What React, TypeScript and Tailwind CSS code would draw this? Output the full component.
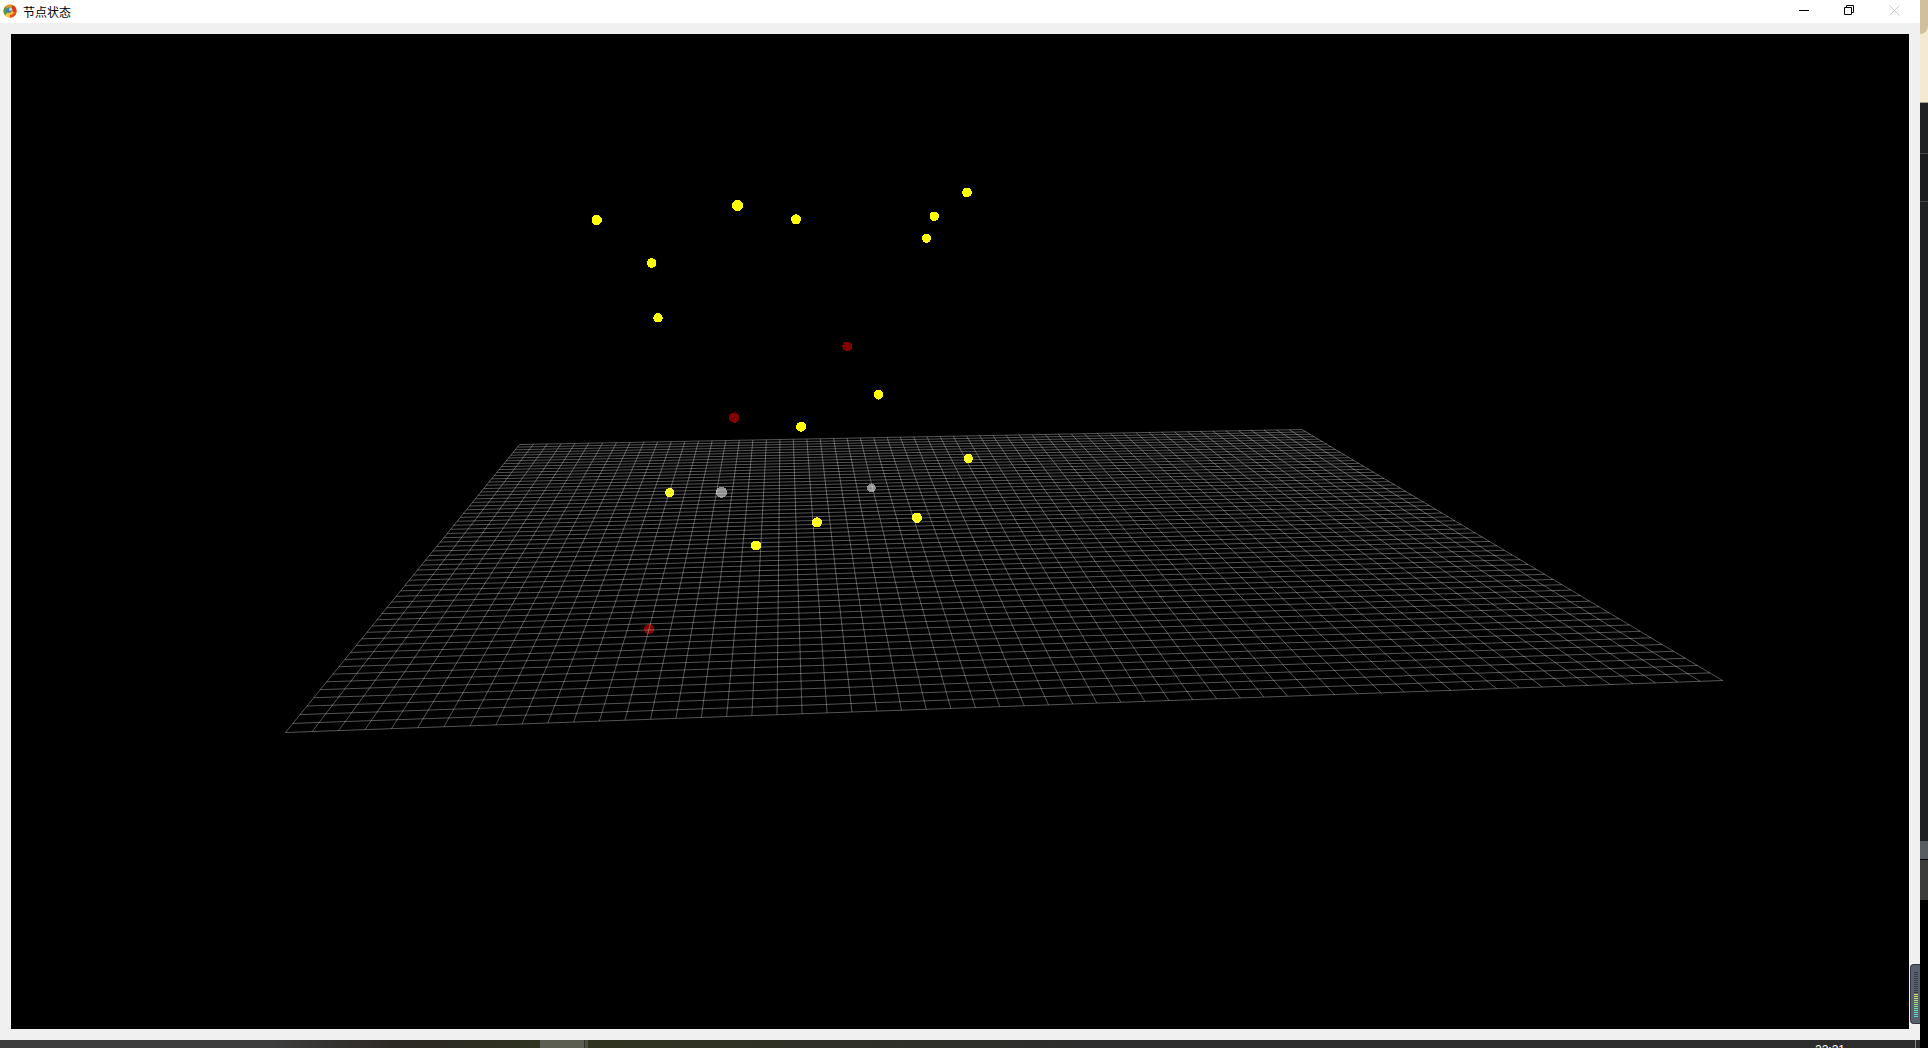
import type { ReactNode } from 'react';

type Point = [number, number];

const CELLS = 59;

// Corners of the floor grid, clockwise from the near left one
const CORNERS: Point[] = [
  [274.5, 698.5],
  [1711.5, 646.5],
  [1291, 395.5],
  [508.5, 410.5],
];

function createProjection([p0, p1, p2, p3]: Point[]) {
  const dx1 = p1[0] - p2[0];
  const dy1 = p1[1] - p2[1];
  const dx2 = p3[0] - p2[0];
  const dy2 = p3[1] - p2[1];
  const sx = p0[0] - p1[0] + p2[0] - p3[0];
  const sy = p0[1] - p1[1] + p2[1] - p3[1];
  const det = dx1 * dy2 - dx2 * dy1;
  const g = (sx * dy2 - dx2 * sy) / det;
  const h = (dx1 * sy - sx * dy1) / det;
  const a = p1[0] - p0[0] + g * p1[0];
  const b = p3[0] - p0[0] + h * p3[0];
  const d = p1[1] - p0[1] + g * p1[1];
  const e = p3[1] - p0[1] + h * p3[1];

  return (u: number, v: number): Point => {
    const w = g * u + h * v + 1;
    return [(a * u + b * v + p0[0]) / w, (d * u + e * v + p0[1]) / w];
  };
}

const project = createProjection(CORNERS);

const gridPath = Array.from({ length: CELLS + 1 }, (_, i) => {
  const t = i / CELLS;
  const [ax, ay] = project(t, 0);
  const [bx, by] = project(t, 1);
  const [cx, cy] = project(0, t);
  const [dx, dy] = project(1, t);
  return `M${ax} ${ay}L${bx} ${by}M${cx} ${cy}L${dx} ${dy}`;
}).join('');

const COLORS = {
  active: '#ffff00',
  fault: '#800000',
  idle: '#8c8c8c',
};

const nodes: { x: number; y: number; r: number; state: keyof typeof COLORS }[] = [
  { x: 585.7, y: 186, r: 5.2, state: 'active' },
  { x: 726.5, y: 171.5, r: 5.5, state: 'active' },
  { x: 785, y: 185.3, r: 5, state: 'active' },
  { x: 956, y: 158.5, r: 4.8, state: 'active' },
  { x: 923.3, y: 182.3, r: 4.8, state: 'active' },
  { x: 915.5, y: 204.2, r: 4.6, state: 'active' },
  { x: 640.6, y: 229, r: 4.8, state: 'active' },
  { x: 647, y: 283.7, r: 4.7, state: 'active' },
  { x: 836.2, y: 312.4, r: 4.9, state: 'fault' },
  { x: 867.5, y: 360.7, r: 4.9, state: 'active' },
  { x: 723.2, y: 383.6, r: 5.2, state: 'fault' },
  { x: 790.1, y: 392.7, r: 5, state: 'active' },
  { x: 957.4, y: 424.5, r: 4.6, state: 'active' },
  { x: 658.7, y: 458.6, r: 4.6, state: 'active' },
  { x: 710.5, y: 458.3, r: 5.6, state: 'idle' },
  { x: 860.3, y: 454, r: 4.5, state: 'idle' },
  { x: 906, y: 483.8, r: 5.1, state: 'active' },
  { x: 806, y: 488.4, r: 5, state: 'active' },
  { x: 745, y: 511.5, r: 5, state: 'active' },
  { x: 638, y: 595, r: 5, state: 'fault' },
];

function AppLogo() {
  return (
    <svg className="h-[14px] w-[14px] shrink-0" viewBox="0 0 14 14" aria-hidden>
      <circle cx="7" cy="7" r="6.6" fill="#e9a13a" />
      <path d="M3 1.9A6.6 6.6 0 0 0 2 11.3L5 8.6 4.2 5Z" fill="#5b9a3c" />
      <path d="M3 1.9A6.6 6.6 0 0 1 9.5.9L8.4 4.2 4.2 5Z" fill="#d99a2c" />
      <path d="M9.5.9A6.6 6.6 0 0 1 13.3 8.8L9.8 8 8.4 4.2Z" fill="#d83a1e" />
      <path d="M13.3 8.8A6.6 6.6 0 0 1 6.6 13.6L7.2 10 9.8 8Z" fill="#e8491f" />
      <path d="M2 11.3A6.6 6.6 0 0 0 6.6 13.6L7.2 10 5 8.6Z" fill="#f3cf3a" />
      <circle cx="6" cy="6.2" r="2.7" fill="#3f83b5" />
      <circle cx="7.6" cy="5.3" r="1.5" fill="#bfe0ec" />
      <path d="M6.5 9.4l3-2.6 1.3 2-2.6 2.4Z" fill="#f7c331" />
    </svg>
  );
}

function CaptionButton({ label, disabled, children }: { label: string; disabled?: boolean; children: ReactNode }) {
  return (
    <button
      type="button"
      aria-label={label}
      disabled={disabled}
      className="flex h-[21px] w-[45px] items-center justify-center text-black disabled:text-[#c8c8c8]"
    >
      <svg className="h-[11px] w-[11px]" viewBox="0 0 11 11" fill="none" stroke="currentColor" aria-hidden>
        {children}
      </svg>
    </button>
  );
}

function TitleBar() {
  return (
    <header className="flex h-[23px] items-start bg-white pr-[3px] pl-[3px]">
      <div className="flex flex-1 items-start gap-[6px] pt-1">
        <AppLogo />
        <h1 className="font-['Noto_Sans_CJK_SC',sans-serif] text-xs leading-4 text-black">节点状态</h1>
      </div>
      <CaptionButton label="最小化">
        <path d="M0 5.5h10" />
      </CaptionButton>
      <CaptionButton label="还原">
        <path d="M.5 2.5h7v7h-7zM2.5 2.5v-2h7v7h-2" />
      </CaptionButton>
      <CaptionButton label="关闭" disabled>
        <path d="M.5.5l10 10M10.5.5l-10 10" />
      </CaptionButton>
    </header>
  );
}

function NodeScene() {
  return (
    <svg className="h-full w-full bg-black" viewBox="0 0 1898 995" role="img" aria-label="节点状态">
      {nodes.map((node) => (
        <circle
          key={`${node.x}-${node.y}`}
          cx={node.x}
          cy={node.y}
          r={node.r}
          fill={COLORS[node.state]}
          shapeRendering="crispEdges"
        />
      ))}
      <path d={gridPath} fill="none" stroke="#fff" strokeOpacity="0.33" strokeWidth="1" />
    </svg>
  );
}

const levels = [
  '#3a3d45', '#3a3d45', '#3a3d45', '#3a3d45', '#3a3d45', '#3a3d45', '#3a3d45', '#3a3d45', '#3a3d45', '#3a3d45', '#3a3d45',
  '#e2dc55', '#d3e05c', '#c3e263', '#b4e46b', '#a2e573', '#92e57f', '#82e58c', '#74e59b', '#6ae3aa', '#62e0b9', '#5cdcc4', '#58d8cc',
];

function LevelMeter() {
  return (
    <div className="absolute right-0 bottom-4 flex h-[60px] w-[10px] flex-col gap-px rounded-l border border-r-0 border-[#343842] bg-[#596070] py-[7px] pr-[2px] pl-[3px]">
      {levels.map((color, i) => (
        <span key={i} className="h-px w-1 shrink-0" style={{ backgroundColor: color }} />
      ))}
    </div>
  );
}

function Taskbar() {
  return (
    <footer className="flex h-2 items-start overflow-hidden bg-[#2d2d2d]">
      <div className="h-full w-[540px] bg-linear-to-r from-[#3d3d3d] from-50% via-[#2b2723] via-75% to-[#30331f]" />
      <div className="h-full w-11 bg-[#5b5e50]" />
      <div className="h-full w-1 border-l border-[#303326] bg-[#4b4e43]" />
      <div className="h-full flex-1 bg-linear-to-r from-[#30331f] to-[#2d2d2d] to-40%" />
      <time className="mt-[4px] mr-[70px] font-['Liberation_Sans',sans-serif] text-xs leading-3 text-white">22:21</time>
      <div className="mr-1 h-full w-px bg-[#8a8a8a]" />
    </footer>
  );
}

function DesktopEdge() {
  return (
    <aside className="flex w-2 flex-col bg-black">
      <div className="bg-[#f4ead2]">
        <div className="h-[34px] rounded-br-lg bg-[#d1c09b]" />
      </div>
      <div className="h-[69px] border-b border-[#a9a390] bg-[#f4ead2]" />
      <div className="h-[51px] border-b border-[#444648] bg-[#202224]" />
      <div className="h-12 border-b border-[#444648] bg-[#1b1d1f]" />
      <div className="h-[639px] bg-[#1f2123]" />
      <div className="h-[19px] border-b border-black bg-[#575d60]" />
      <div className="h-10 bg-[#3c3c3b]" />
    </aside>
  );
}

export default function App() {
  return (
    <div className="flex h-screen overflow-hidden">
      <div className="flex min-w-0 flex-1 flex-col">
        <div className="relative flex min-h-0 flex-1 flex-col bg-[#f0f0f0]">
          <TitleBar />
          <main className="min-h-0 flex-1 p-[11px]">
            <NodeScene />
          </main>
          <LevelMeter />
        </div>
        <Taskbar />
      </div>
      <DesktopEdge />
    </div>
  );
}
